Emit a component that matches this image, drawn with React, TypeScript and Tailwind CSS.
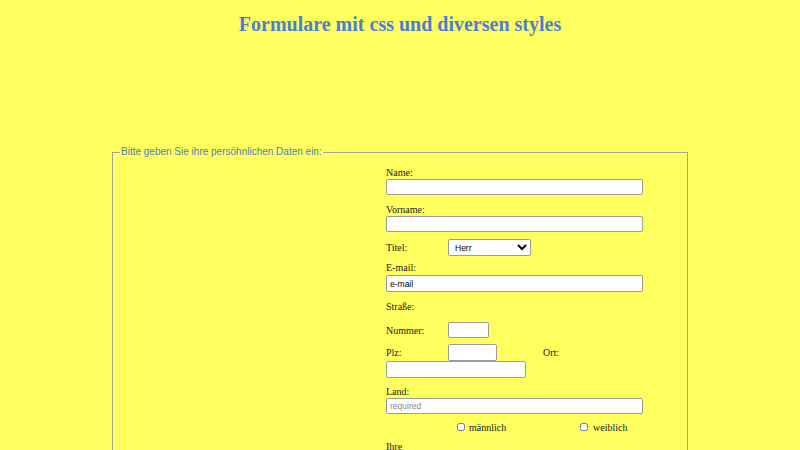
import React from "react";

const inputCls =
  "block box-border rounded-[2px] border border-[#9a9a9a] bg-white px-[3px] font-['Liberation_Sans',Arial,sans-serif] text-[8.5px] text-black placeholder:text-[#8a8a8a] outline-none";

const Label: React.FC<{ children: React.ReactNode; className?: string }> = ({
  children,
  className = "",
}) => <div className={"leading-[12px] " + className}>{children}</div>;

export default function App() {
  return (
    <div className="h-screen overflow-hidden bg-[#ffff60] font-['Liberation_Serif','Times_New_Roman',serif] text-[10px] text-[#1c1c1c]">
      <h1 className="pt-[13px] text-center text-[20px] font-bold leading-[23px] text-[#4c7fd2]">
        Formulare mit css und diversen styles
      </h1>
      <form className="mt-[110px]" onSubmit={(e) => e.preventDefault()}>
        <fieldset className="mx-auto m-0 w-[576px] border border-[#a3a39a] px-[7px] pb-6">
          <legend className="px-[1px] font-['Liberation_Sans',Arial,sans-serif] text-[10px] leading-[12px] text-[#5082b6]">
            Bitte geben Sie ihre persöhnlichen Daten ein:
          </legend>
          <div className="ml-[266px] w-[270px] pt-[9px]">
            <Label>Name:</Label>
            <input className={inputCls + " h-[16px] w-[257px]"} />

            <Label className="mt-[9px]">Vorname:</Label>
            <input className={inputCls + " h-[16px] w-[257px]"} />

            <div className="mt-[7px] flex h-[17px] items-center">
              <div className="w-[62px]">Titel:</div>
              <select
                className="box-border h-[17px] w-[83px] rounded-[2px] border border-[#9a9a9a] bg-white pl-[2px] font-['Liberation_Sans',Arial,sans-serif] text-[8.5px] text-black"
                defaultValue="Herr"
              >
                <option>Herr</option>
                <option>Frau</option>
                <option>Dr.</option>
              </select>
            </div>

            <Label className="mt-[6px]">E-mail:</Label>
            <input
              className={inputCls + " mt-[1px] h-[17px] w-[257px]"}
              defaultValue="e-mail"
            />

            <Label className="mt-[9px]">Straße:</Label>

            <div className="mt-[9px] flex h-[16px] items-center">
              <div className="w-[62px]">Nummer:</div>
              <input className={inputCls + " h-[16px] w-[41px]"} />
            </div>

            <div className="mt-[6px] flex h-[17px] items-center">
              <div className="w-[62px]">Plz:</div>
              <input className={inputCls + " h-[17px] w-[49px]"} />
              <div className="ml-[46px]">Ort:</div>
            </div>
            <input className={inputCls + " h-[17px] w-[140px]"} />

            <Label className="mt-[8px]">Land:</Label>
            <input
              className={inputCls + " h-[16px] w-[257px]"}
              placeholder="required"
            />

            <div className="mt-[7px] flex h-[12px] items-center">
              <label className="ml-[71px] flex w-[123px] items-center">
                <input type="checkbox" className="m-0 h-[8px] w-[8px]" />
                <span className="ml-[4px]">männlich</span>
              </label>
              <label className="flex items-center">
                <input type="checkbox" className="m-0 h-[8px] w-[8px]" />
                <span className="ml-[5px]">weiblich</span>
              </label>
            </div>

            <Label className="mt-[8px] w-[40px]">Ihre Nachricht:</Label>
            <textarea className={inputCls + " mt-[2px] h-[60px] w-[257px]"} />
          </div>
        </fieldset>
      </form>
    </div>
  );
}
